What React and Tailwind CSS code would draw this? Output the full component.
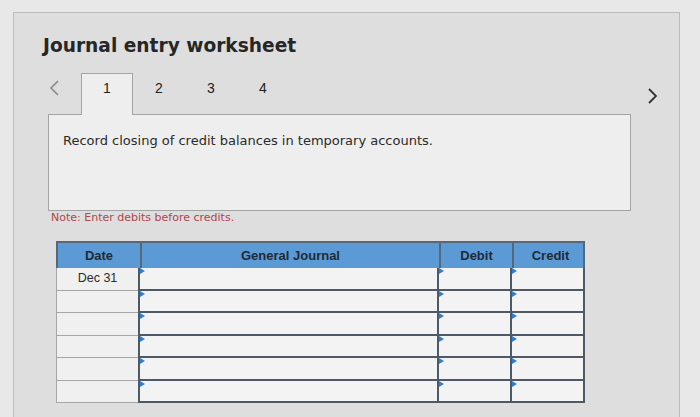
import React from "react"

const rows = ["Dec 31", "", "", "", "", ""]

function Marker() {
  return (
    <span className="absolute left-0 top-0 h-0 w-0 border-y-[3px] border-l-[5px] border-y-transparent border-l-[#2f7fd0]" />
  )
}

function InputCell({ last }) {
  return (
    <div className={`relative h-full border-b-2 border-l-2 border-[#4e5967] bg-[#f3f3f3] ${last ? "border-r-2" : ""}`}>
      <Marker />
    </div>
  )
}

export default function App() {
  const tabs = ["1", "2", "3", "4"]

  return (
    <div className="h-[417px] w-[700px] overflow-hidden bg-[#e8e8e8] pl-[13px] pt-[12px] font-['DejaVu_Sans',sans-serif] text-[#222]">
      <div className="h-[420px] w-[667px] border-l border-r border-t border-[#bcbcbc] bg-[#dedede] pt-[21px]">
        <h1 className="pl-[29px] text-[18.6px] font-bold leading-[24px] text-[#262626]">Journal entry worksheet</h1>

        <div className="mt-[14px] flex items-end pl-[34px]">
          <div className="flex h-[42px] w-[33px] items-center justify-start pb-[10px] text-[#8a8a8a]">
            <svg width="12" height="18" viewBox="0 0 12 18" fill="none" stroke="currentColor" strokeWidth="1.6">
              <path d="M10 2 L3 9 L10 16" />
            </svg>
          </div>
          {tabs.map((t, i) => (
            <div
              key={t}
              className={`relative flex h-[42px] w-[52px] items-start justify-center font-['Liberation_Sans',sans-serif] text-[14px] ${
                i === 0 ? "z-10 -mb-px border-l border-r border-t border-[#a4a4a4] bg-[#eeeeee] pt-[4px]" : "pt-[6px]"
              }`}
            >
              {t}
            </div>
          ))}
          <div className="ml-auto mr-[20px] flex h-[42px] items-center pt-[6px] text-[#333]">
            <svg width="12" height="18" viewBox="0 0 12 18" fill="none" stroke="currentColor" strokeWidth="1.8">
              <path d="M2 2 L9 9 L2 16" />
            </svg>
          </div>
        </div>

        <div className="ml-[34px] h-[97px] w-[583px] border border-[#a4a4a4] bg-[#eeeeee] pl-[14px] pt-[17px] text-[13px] leading-[18px] text-[#2a2a2a]">
          Record closing of credit balances in temporary accounts.
        </div>

        <p className="mt-0 pl-[37px] text-[11px] leading-[14px] text-[#b0454c]">Note: Enter debits before credits.</p>

        <div className="ml-[42px] mt-[16px] w-[529px] font-['Liberation_Sans',sans-serif]">
          <div className="grid h-[27px] grid-cols-[82px_299px_73px_75px] border-2 border-b-0 border-[#56677a] bg-[#5c9ad6] text-[13px] font-bold text-[#1f2a36]">
            <div className="flex items-center justify-center">Date</div>
            <div className="flex items-center justify-center border-l-2 border-[#56677a]">General Journal</div>
            <div className="flex items-center justify-center border-l-2 border-[#56677a]">Debit</div>
            <div className="flex items-center justify-center border-l-2 border-[#56677a]">Credit</div>
          </div>
          {rows.map((d, i) => (
            <div key={i} className="grid h-[22.5px] grid-cols-[82px_299px_73px_75px]">
              <div className="flex h-full items-center justify-center border-b border-l border-[#a6a6a6] bg-[#f0f0f0] text-[12.5px] text-[#2a2a2a]">
                {d}
              </div>
              <InputCell />
              <InputCell />
              <InputCell last />
            </div>
          ))}
        </div>
      </div>
    </div>
  )
}
